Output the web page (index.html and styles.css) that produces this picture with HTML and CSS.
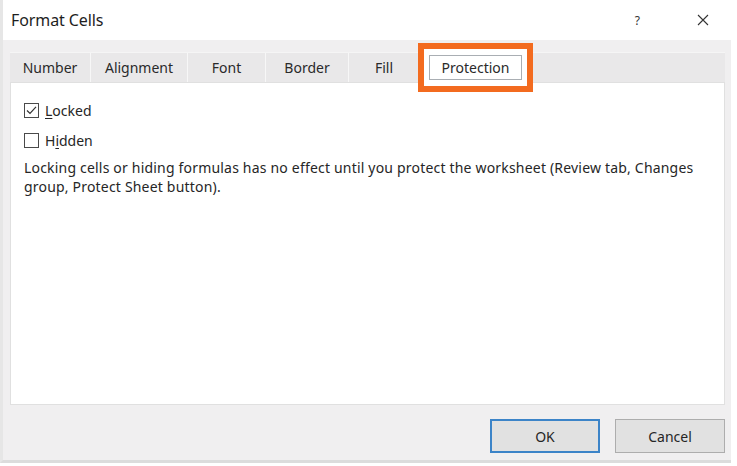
FILE: index.html
```html
<!DOCTYPE html>
<html>
<head>
<meta charset="utf-8">
<link rel="stylesheet" href="styles.css">
</head>
<body>
<div class="dialog">
  <div class="titlebar">
    <span class="title">Format Cells</span>
    <div class="controls">
      <span class="help">?</span>
      <svg class="close" width="12" height="12" viewBox="0 0 12 12"><path d="M1 1L11 11M11 1L1 11" stroke="#333" stroke-width="1.1" fill="none"/></svg>
    </div>
  </div>
  <div class="body">
    <div class="tabs">
      <div class="tab t-number">Number</div>
      <div class="tab t-align">Alignment</div>
      <div class="tab t-font">Font</div>
      <div class="tab t-border">Border</div>
      <div class="tab t-fill">Fill</div>
      <div class="tab-active">
        <div class="highlight"><span class="focus">Protection</span></div>
      </div>
    </div>
    <div class="panel">
      <label class="check"><span class="box checked"><svg width="13" height="13" viewBox="0 0 13 13"><path d="M2 6.5L5 9.5L11 2.8" stroke="#333" stroke-width="1.2" fill="none"/></svg></span><span><u>L</u>ocked</span></label>
      <label class="check"><span class="box"></span><span>H<u>i</u>dden</span></label>
      <p class="note">Locking cells or hiding formulas has no effect until you protect the worksheet (Review tab, Changes group, Protect Sheet button).</p>
    </div>
    <div class="buttons">
      <button class="btn default">OK</button>
      <button class="btn">Cancel</button>
    </div>
  </div>
</div>
</body>
</html>
```
FILE: styles.css
```css
html, body {
  margin: 0;
  padding: 0;
  width: 737px;
  height: 466px;
  overflow: hidden;
  background: #ffffff;
  font-family: "Noto Sans", "Open Sans", sans-serif;
  color: #262626;
}
.dialog {
  width: 731px;
  height: 463px;
  border-left: 3px solid #e6e6e6;
  border-bottom: 3px solid #dcdcdc;
  box-sizing: border-box;
  background: #f0eff0;
  display: flex;
  flex-direction: column;
}
.titlebar {
  height: 40px;
  background: #ffffff;
  display: flex;
  align-items: center;
  justify-content: space-between;
  padding: 0 22px 0 8px;
}
.title {
  font-size: 16px;
  color: #1e1e1e;
  letter-spacing: -0.1px;
}
.controls {
  display: flex;
  align-items: center;
  gap: 57px;
}
.help {
  font-size: 12px;
  color: #333;
}
.close { display: block; }
.body {
  flex: 1;
  padding: 0 6px 0 7px;
  display: flex;
  flex-direction: column;
}
.tabs {
  margin-top: 12px;
  height: 30px;
  display: flex;
  position: relative;
  background: #e9e8e9;
  border-top: 1px solid #f5f5f5;
  box-sizing: border-box;
}
.tab {
  border-right: 1px solid #f7f7f7;
  font-size: 14px;
  color: #2a2a2a;
  display: flex;
  align-items: center;
  justify-content: center;
  box-sizing: border-box;
}
.t-number { width: 81px; }
.t-align { width: 97px; }
.t-font { width: 78px; }
.t-border { width: 83px; }
.t-fill { width: 71px; }
.tab-active {
  position: relative;
  width: 108px;
}
.highlight {
  position: absolute;
  left: -2px;
  top: -10px;
  width: 115px;
  height: 49px;
  border: 6px solid #f36b1f;
  box-sizing: border-box;
  background: #ffffff;
  display: flex;
  align-items: center;
  justify-content: center;
  z-index: 2;
}
.focus {
  border: 1px solid #a9aeb3;
  width: 93px;
  height: 25px;
  box-sizing: border-box;
  display: flex;
  align-items: center;
  justify-content: center;
  font-size: 14px;
  color: #2a2a2a;
}
.panel {
  height: 323px;
  background: #ffffff;
  border: 1px solid #e0e0e0;
  box-sizing: border-box;
  padding: 18px 13px 0 13px;
  display: flex;
  flex-direction: column;
}
.check {
  display: flex;
  align-items: center;
  gap: 6px;
  font-size: 14px;
  height: 19px;
  margin-bottom: 11px;
}
.check u { text-decoration-thickness: 1px; text-underline-offset: 2px; }
.box {
  width: 15px;
  height: 15px;
  border: 1px solid #4a4a4a;
  box-sizing: border-box;
  background: #fff;
  display: flex;
  align-items: center;
  justify-content: center;
}
.box svg { display: block; }
.note {
  margin: -3px 0 0 0;
  font-size: 14px;
  line-height: 19px;
  letter-spacing: 0.19px;
  color: #262626;
}
.buttons {
  display: flex;
  justify-content: flex-end;
  gap: 15px;
  margin-top: 14px;
}
.btn {
  width: 110px;
  height: 34px;
  font-family: "Noto Sans", "Open Sans", sans-serif;
  font-size: 14px;
  color: #262626;
  background: #e1e1e1;
  border: 1px solid #adadad;
  box-sizing: border-box;
  padding: 0;
}
.btn.default {
  border: 2px solid #3c84c8;
}
```
